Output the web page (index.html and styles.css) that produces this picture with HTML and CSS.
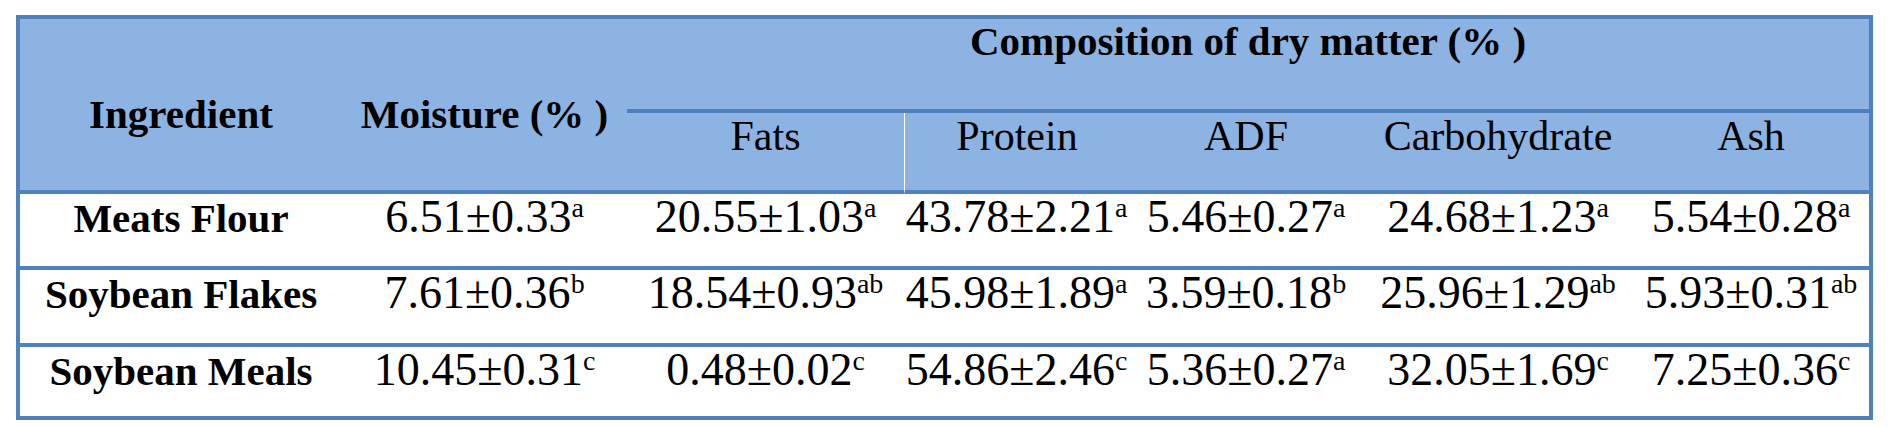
FILE: index.html
```html
<!DOCTYPE html>
<html>
<head>
<meta charset="utf-8">
<link rel="stylesheet" href="styles.css">
</head>
<body>
<table class="comp">
  <colgroup>
    <col class="c-ing"><col class="c-moi"><col class="c-fat"><col class="c-pro"><col class="c-adf"><col class="c-carb"><col class="c-ash">
  </colgroup>
  <thead>
    <tr class="h1">
      <th class="lead" rowspan="2">Ingredient</th>
      <th class="lead" rowspan="2">Moisture (% )</th>
      <th class="group" colspan="5">Composition of dry matter (% )</th>
    </tr>
    <tr class="h2">
      <th class="sub">Fats</th>
      <th class="sub divider">Protein</th>
      <th class="sub">ADF</th>
      <th class="sub">Carbohydrate</th>
      <th class="sub">Ash</th>
    </tr>
  </thead>
  <tbody>
    <tr class="r1">
      <td class="name">Meats Flour</td>
      <td>6.51±0.33<sup>a</sup></td>
      <td>20.55±1.03<sup>a</sup></td>
      <td>43.78±2.21<sup>a</sup></td>
      <td>5.46±0.27<sup>a</sup></td>
      <td>24.68±1.23<sup>a</sup></td>
      <td>5.54±0.28<sup>a</sup></td>
    </tr>
    <tr class="r2">
      <td class="name">Soybean Flakes</td>
      <td>7.61±0.36<sup>b</sup></td>
      <td>18.54±0.93<sup>ab</sup></td>
      <td>45.98±1.89<sup>a</sup></td>
      <td>3.59±0.18<sup>b</sup></td>
      <td>25.96±1.29<sup>ab</sup></td>
      <td>5.93±0.31<sup>ab</sup></td>
    </tr>
    <tr class="r3">
      <td class="name">Soybean Meals</td>
      <td>10.45±0.31<sup>c</sup></td>
      <td>0.48±0.02<sup>c</sup></td>
      <td>54.86±2.46<sup>c</sup></td>
      <td>5.36±0.27<sup>a</sup></td>
      <td>32.05±1.69<sup>c</sup></td>
      <td>7.25±0.36<sup>c</sup></td>
    </tr>
  </tbody>
</table>
</body>
</html>
```
FILE: styles.css
```css
html, body {
  margin: 0;
  padding: 0;
  background: #ffffff;
}

body, .comp, .comp th, .comp td, .comp sup {
  font-family: "Liberation Serif", "Times New Roman", serif;
  color: #000000;
}

.comp {
  margin: 15px 0 0 16px;
  border: 4px solid #4f81bd;
  border-collapse: separate;
  border-spacing: 0;
  table-layout: fixed;
  width: 1857px;
}

.c-ing { width: 322px; }
.c-moi { width: 285px; }
.c-fat { width: 277px; }
.c-pro { width: 225px; }
.c-adf { width: 234px; }
.c-carb { width: 270px; }
.c-ash { width: 236px; }

.comp th, .comp td {
  padding: 0;
  text-align: center;
  vertical-align: top;
  white-space: nowrap;
}

.comp thead th {
  background: #8db3e2;
}

.h1 { height: 94px; }
.h2 { height: 81px; }
.r1 { height: 76px; }
.r2 { height: 77px; }
.r3 { height: 69px; }

.comp .lead {
  font-size: 41px;
  line-height: 41px;
  font-weight: bold;
  padding-top: 75px;
  border-bottom: 4px solid #4f81bd;
}

.comp .group {
  font-size: 41px;
  line-height: 41px;
  font-weight: bold;
  padding-top: 2px;
  border-bottom: 4px solid #4f81bd;
}

.comp .sub {
  font-size: 42px;
  line-height: 42px;
  font-weight: normal;
  padding-top: 2px;
  border-bottom: 4px solid #4f81bd;
}

.comp .divider {
  border-left: 1px solid #ffffff;
}

.comp td {
  font-size: 46px;
  line-height: 46px;
}

.comp .r1 td, .comp .r2 td {
  border-bottom: 4px solid #4f81bd;
}

.comp td.name {
  font-size: 41px;
  line-height: 41px;
  font-weight: bold;
  padding-top: 4px;
}

.comp sup {
  font-size: 28px;
  line-height: 0;
  vertical-align: 15px;
}
```
